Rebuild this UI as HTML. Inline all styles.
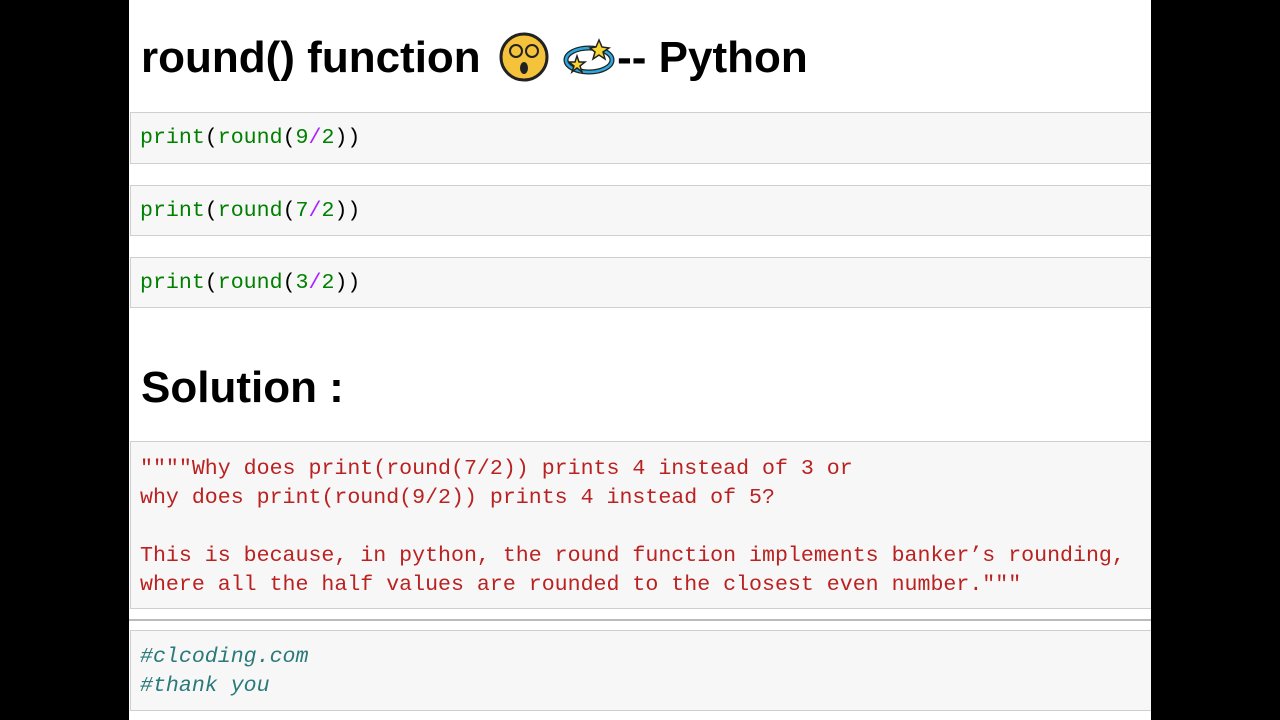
<!DOCTYPE html>
<html><head><style>
body{margin:0;width:1280px;height:720px;background:#000;overflow:hidden;position:relative}
#pg{position:absolute;left:129px;top:0;width:1022px;height:720px;background:#fff;overflow:hidden}
.h{position:absolute;left:12px;font-family:"Liberation Sans",sans-serif;font-weight:bold;font-size:44px;color:#000;white-space:nowrap}
.c{position:absolute;left:1px;width:1030px;background:#f7f7f7;border:1px solid #cfcfcf;box-sizing:border-box;font-family:"Liberation Mono",monospace;font-size:21.6px;line-height:29px;padding-left:9px;white-space:pre;color:#000}
.g{color:#008000}.p{color:#aa22ff}.s{color:#ba2121}.m{color:#2a7a7a;font-style:italic}
</style></head><body><div id="pg">
<div class="h" style="top:32px">round() function <svg width="50" height="50" viewBox="0 0 50 50" style="vertical-align:-10px;margin-left:6px"><circle cx="25" cy="25" r="23" fill="#f5c33b" stroke="#222" stroke-width="3"/><circle cx="17" cy="19" r="6" fill="none" stroke="#222" stroke-width="2"/><circle cx="33" cy="19" r="6" fill="none" stroke="#222" stroke-width="2"/><ellipse cx="25" cy="36" rx="4" ry="6" fill="#222"/></svg> <svg width="52" height="40" viewBox="0 0 52 40" style="vertical-align:-6px;margin-left:2px"><ellipse cx="26" cy="22" rx="23" ry="12" fill="none" stroke="#222" stroke-width="5"/><ellipse cx="26" cy="22" rx="23" ry="12" fill="none" stroke="#29a9e0" stroke-width="2.5"/><polygon points="36,2 39,9 46,10 40,14 42,21 36,17 30,21 32,14 27,10 33,9" fill="#f7d532" stroke="#222" stroke-width="1.5"/><polygon points="14,18 16,24 22,24 17,28 19,34 14,30 9,34 11,28 6,24 12,24" fill="#f7d532" stroke="#222" stroke-width="1.5"/></svg><span style="margin-left:2px">-- Python</span></div>
<div class="c" style="top:112px;height:52px;padding-top:11px"><span class="g">print</span>(<span class="g">round</span>(<span class="g">9</span><span class="p">/</span><span class="g">2</span>))</div>
<div class="c" style="top:185px;height:51px;padding-top:11px"><span class="g">print</span>(<span class="g">round</span>(<span class="g">7</span><span class="p">/</span><span class="g">2</span>))</div>
<div class="c" style="top:257px;height:51px;padding-top:11px"><span class="g">print</span>(<span class="g">round</span>(<span class="g">3</span><span class="p">/</span><span class="g">2</span>))</div>
<div class="h" style="top:363px">Solution :</div>
<div class="c s" style="top:441px;height:168px;padding-top:13px">""""Why does print(round(7/2)) prints 4 instead of 3 or
why does print(round(9/2)) prints 4 instead of 5?

This is because, in python, the round function implements banker’s rounding,
where all the half values are rounded to the closest even number."""</div>
<div style="position:absolute;left:0;top:619px;width:1022px;height:2px;background:#bbb"></div>
<div class="c m" style="top:630px;height:81px;padding-top:12px">#clcoding.com
#thank you</div>
</div></body></html>
